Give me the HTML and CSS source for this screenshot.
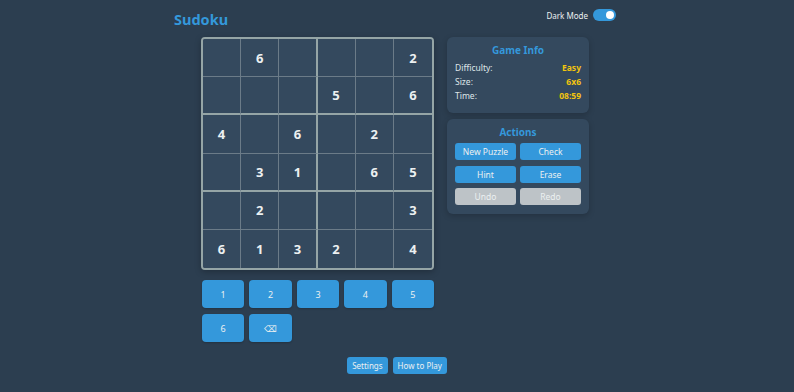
FILE: index.html
```html
<!DOCTYPE html>
<html>
<head>
<meta charset="utf-8">
<link rel="stylesheet" href="styles.css">
</head>
<body>
<div class="app">
  <header class="header">
    <h1 class="title">Sudoku</h1>
    <div class="mode">
      <span class="mode-label">Dark Mode</span>
      <span class="toggle"><span class="knob"></span></span>
    </div>
  </header>
  <main class="main">
    <section class="left">
      <div class="board">
        <div class="cell"></div><div class="cell">6</div><div class="cell c3"></div><div class="cell"></div><div class="cell"></div><div class="cell c6">2</div>
        <div class="cell r2"></div><div class="cell r2"></div><div class="cell r2 c3"></div><div class="cell r2">5</div><div class="cell r2"></div><div class="cell r2 c6">6</div>
        <div class="cell">4</div><div class="cell"></div><div class="cell c3">6</div><div class="cell"></div><div class="cell">2</div><div class="cell c6"></div>
        <div class="cell r2"></div><div class="cell r2">3</div><div class="cell r2 c3">1</div><div class="cell r2"></div><div class="cell r2">6</div><div class="cell r2 c6">5</div>
        <div class="cell"></div><div class="cell">2</div><div class="cell c3"></div><div class="cell"></div><div class="cell"></div><div class="cell c6">3</div>
        <div class="cell r6">6</div><div class="cell r6">1</div><div class="cell r6 c3">3</div><div class="cell r6">2</div><div class="cell r6"></div><div class="cell r6 c6">4</div>
      </div>
      <div class="pad">
        <button class="key">1</button>
        <button class="key">2</button>
        <button class="key">3</button>
        <button class="key">4</button>
        <button class="key">5</button>
        <button class="key">6</button>
        <button class="key erase-key">⌫</button>
      </div>
    </section>
    <aside class="side">
      <div class="card info-card">
        <h2 class="card-title">Game Info</h2>
        <div class="info-row"><span class="info-label">Difficulty:</span><span class="info-value">Easy</span></div>
        <div class="info-row"><span class="info-label">Size:</span><span class="info-value">6x6</span></div>
        <div class="info-row"><span class="info-label">Time:</span><span class="info-value">08:59</span></div>
      </div>
      <div class="card actions-card">
        <h2 class="card-title">Actions</h2>
        <div class="actions">
          <button class="btn">New Puzzle</button>
          <button class="btn">Check</button>
          <button class="btn">Hint</button>
          <button class="btn">Erase</button>
          <button class="btn disabled">Undo</button>
          <button class="btn disabled">Redo</button>
        </div>
      </div>
    </aside>
  </main>
  <footer class="footer">
    <button class="btn foot-btn">Settings</button>
    <button class="btn foot-btn">How to Play</button>
  </footer>
</div>
</body>
</html>
```

FILE: styles.css
```css
* { box-sizing: border-box; }
html, body { margin: 0; padding: 0; }
body {
  background: #2c3e50;
  font-family: "Noto Sans", "Open Sans", sans-serif;
  color: #ecf0f1;
  width: 794px;
  height: 392px;
  overflow: hidden;
}
.app {
  width: 446px;
  margin: 0 auto;
}
.header {
  display: flex;
  justify-content: space-between;
  align-items: center;
  height: 37px;
}
.title {
  margin: 0;
  font-size: 14.5px;
  font-weight: 700;
  color: #3498db;
  line-height: 1;
  padding-top: 2px;
}
.mode {
  display: flex;
  align-items: center;
  gap: 5px;
  margin-top: -7px;
  padding-right: 4px;
}
.mode-label {
  font-size: 8px;
  color: #ecf0f1;
}
.toggle {
  width: 23px;
  height: 12px;
  border-radius: 6px;
  background: #3498db;
  position: relative;
  display: inline-block;
}
.knob {
  position: absolute;
  right: 2px;
  top: 2px;
  width: 8px;
  height: 8px;
  border-radius: 50%;
  background: #fff;
}
.main {
  display: flex;
  justify-content: center;
  gap: 13px;
  padding-right: 4px;
}
.left {
  width: 233px;
}
.board {
  width: 233px;
  height: 233px;
  display: grid;
  grid-template-columns: repeat(6, 1fr);
  grid-template-rows: repeat(6, 1fr);
  border: 2px solid #95a5a6;
  border-radius: 4px;
  background: #34495e;
  overflow: hidden;
  box-shadow: 0 2px 6px rgba(0,0,0,0.25);
}
.cell {
  display: flex;
  align-items: center;
  justify-content: center;
  font-size: 13px;
  font-weight: 700;
  color: #ecf0f1;
  border-right: 1px solid #6b7b88;
  border-bottom: 1px solid #6b7b88;
  background: #34495e;
}
.cell.c3 { border-right: 2px solid #95a5a6; }
.cell.c6 { border-right: none; }
.cell.r2 { border-bottom: 2px solid #95a5a6; }
.cell.r6 { border-bottom: none; }
.pad {
  margin-top: 10px;
  display: grid;
  grid-template-columns: repeat(5, 1fr);
  column-gap: 5px;
  row-gap: 6px;
  padding-left: 1px;
}
.key {
  height: 28px;
  border: none;
  border-radius: 4px;
  background: #3498db;
  color: #ecf0f1;
  font-family: inherit;
  font-size: 9px;
  padding: 0;
  box-shadow: 0 1px 2px rgba(0,0,0,0.2);
}
.side {
  width: 142px;
  display: flex;
  flex-direction: column;
  gap: 6px;
}
.card {
  background: #34495e;
  border-radius: 6px;
  box-shadow: 0 2px 6px rgba(0,0,0,0.2);
}
.info-card { padding: 6px 8px 10px; }
.actions-card { padding: 6px 8px 9px; }
.card-title {
  margin: 0 0 4px;
  font-size: 10px;
  font-weight: 700;
  color: #3498db;
  text-align: center;
  line-height: 14px;
}
.info-row {
  display: flex;
  justify-content: space-between;
  font-size: 8.5px;
  line-height: 14px;
}
.info-label { color: #dfe6e9; }
.info-value { color: #f1c40f; font-weight: 700; }
.actions {
  display: grid;
  grid-template-columns: 1fr 1fr;
  column-gap: 4px;
  row-gap: 5.5px;
}
.btn {
  height: 17px;
  border: none;
  border-radius: 3px;
  background: #3498db;
  color: #ecf0f1;
  font-family: inherit;
  font-size: 8.5px;
  padding: 0;
}
.btn.disabled {
  background: #bdc3c7;
  color: #ecf0f1;
}
.footer {
  display: flex;
  justify-content: center;
  gap: 5px;
  margin-top: 15px;
}
.foot-btn {
  height: 17px;
  padding: 0 5px;
  font-size: 8px;
}
```
